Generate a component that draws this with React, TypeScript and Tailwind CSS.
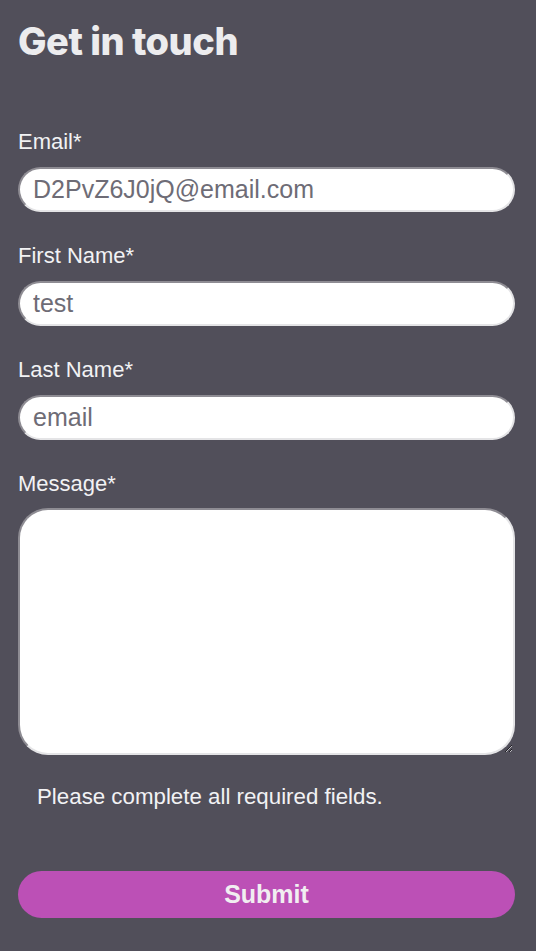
import { useState } from "react";

const inputClass =
  "block h-[45px] w-full rounded-full border-2 border-t-[#8e8c93] border-l-[#8e8c93] border-r-[#e4e4e6] border-b-[#e4e4e6] bg-white px-[13px] text-[25px] text-[#6e6c76] outline-none";

function Field({
  label,
  value,
  onChange,
}: {
  label: string;
  value: string;
  onChange: (v: string) => void;
}) {
  return (
    <div className="mb-[30px]">
      <label className="mb-[13px] block h-[26px] text-[22px] leading-[28px] text-[#f2f2f4]">
        {label}
      </label>
      <input
        className={inputClass}
        value={value}
        onChange={(e) => onChange(e.target.value)}
      />
    </div>
  );
}

export default function App() {
  const [email, setEmail] = useState("D2PvZ6J0jQ@email.com");
  const [first, setFirst] = useState("test");
  const [last, setLast] = useState("email");
  const [message, setMessage] = useState("");

  return (
    <div
      className="min-h-[951px] w-full bg-[#514f5a] pl-[18px] pr-[21px] pt-[19px] pb-[33px]"
      style={{ fontFamily: '"Liberation Sans", Arial, sans-serif' }}
    >
      <h1 className="h-[44px] font-['Inter',sans-serif] text-[38px] leading-[44px] font-extrabold tracking-[-0.5px] text-[#ececee]">
        Get in touch
      </h1>

      <form className="mt-[65px]" onSubmit={(e) => e.preventDefault()}>
        <Field label="Email*" value={email} onChange={setEmail} />
        <Field label="First Name*" value={first} onChange={setFirst} />
        <Field label="Last Name*" value={last} onChange={setLast} />

        <label className="mb-[12px] block h-[26px] text-[22px] leading-[28px] text-[#f2f2f4]">
          Message*
        </label>
        <textarea
          className="block h-[247px] w-full rounded-[30px] border-2 border-t-[#8e8c93] border-l-[#8e8c93] border-r-[#e4e4e6] border-b-[#e4e4e6] bg-white px-[13px] py-2 text-[25px] text-[#6e6c76] outline-none"
          value={message}
          onChange={(e) => setMessage(e.target.value)}
        />

        <p className="mt-[29px] pl-[19px] text-[22.3px] leading-[26px] text-[#f2f2f4]">
          Please complete all required fields.
        </p>

        <button
          type="submit"
          className="mt-[61px] block h-[47px] w-full rounded-full bg-[#bc50b6] text-[25px] font-bold text-[#f1eef1]"
        >
          Submit
        </button>
      </form>
    </div>
  );
}
